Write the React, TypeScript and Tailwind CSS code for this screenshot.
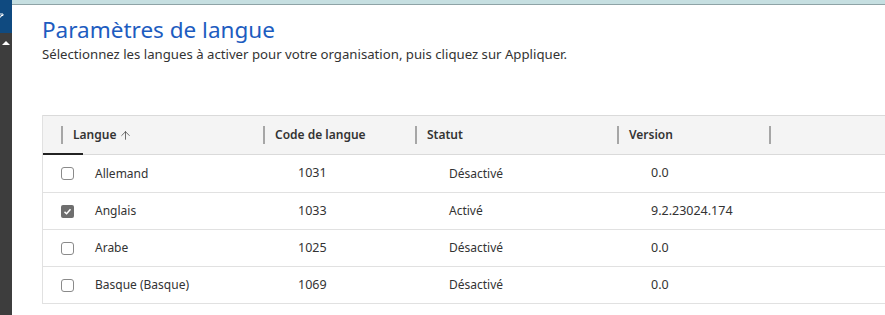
import { ArrowUp } from "lucide-react";

const rows = [
  { name: "Allemand", code: "1031", status: "Désactivé", version: "0.0", checked: false },
  { name: "Anglais", code: "1033", status: "Activé", version: "9.2.23024.174", checked: true },
  { name: "Arabe", code: "1025", status: "Désactivé", version: "0.0", checked: false },
  { name: "Basque (Basque)", code: "1069", status: "Désactivé", version: "0.0", checked: false },
];

const Checkbox = ({ checked }: { checked: boolean }) =>
  checked ? (
    <span className="w-[13px] h-[13px] rounded-[2px] bg-[#6e6e6e] flex items-center justify-center">
      <svg viewBox="0 0 12 12" className="w-[9px] h-[9px]">
        <path d="M2 6.5 L4.8 9 L10 3" fill="none" stroke="white" strokeWidth="2" />
      </svg>
    </span>
  ) : (
    <span className="w-[13px] h-[13px] rounded-[3px] border border-[#8a8a8a] bg-white" />
  );

const Sep = () => <span className="w-[2px] h-[18px] bg-[#a6a6a6]" />;

const App = () => {
  return (
    <div className="flex w-[885px] h-[315px] overflow-hidden bg-white font-['Noto_Sans',sans-serif] text-[#333]">
      {/* left rail */}
      <div className="w-[12px] flex-shrink-0 bg-[#3d3d3d] flex flex-col">
        <div className="h-[33px] bg-[#0f4a80] pt-[13px]">
          <svg viewBox="0 0 4 5" className="w-[4px] h-[5px]">
            <path d="M0 1 H3 M3 1 V2.5 H1 M1 2.5 V4 H0" fill="none" stroke="white" strokeWidth="1" />
          </svg>
        </div>
        <div className="flex justify-center pt-[8px]">
          <span className="w-0 h-0 border-l-[4px] border-r-[4px] border-b-[4px] border-l-transparent border-r-transparent border-b-white" />
        </div>
      </div>

      <div className="flex-1 flex flex-col">
        <div className="h-[5px] bg-[#c6dfe1] border-b border-[#8ea3a6]" />

        <div className="pl-[30px]">
          <h1 className="text-[22.5px] leading-[28px] mt-[11px] text-[#1d5cc0]">Paramètres de langue</h1>
          <p className="text-[13.2px] leading-[18px] mt-[1px] text-[#333]">
            Sélectionnez les langues à activer pour votre organisation, puis cliquez sur Appliquer.
          </p>

          <div className="mt-[52px] border-l border-[#e1e1e1]">
            {/* header */}
            <div className="relative h-[40px] bg-[#f4f4f4] border-y border-[#dadada] flex items-center text-[12px] font-semibold">
              <div className="w-[220px] flex items-center gap-[10px] pl-[18px]">
                <Sep />
                <span className="flex items-center gap-[3px]">
                  Langue <ArrowUp className="w-[13px] h-[13px]" strokeWidth={1.3} />
                </span>
              </div>
              <div className="w-[152px] flex items-center gap-[10px]">
                <Sep />
                <span>Code de langue</span>
              </div>
              <div className="w-[202px] flex items-center gap-[10px]">
                <Sep />
                <span>Statut</span>
              </div>
              <div className="w-[152px] flex items-center gap-[10px]">
                <Sep />
                <span>Version</span>
              </div>
              <Sep />
              <span className="absolute left-0 -bottom-[1px] w-[40px] h-[2px] bg-[#222]" />
            </div>

            {rows.map((r, i) => (
              <div
                key={r.code}
                className={`${i === 0 ? "h-[38px]" : "h-[37px]"} border-b border-[#e1e1e1] flex items-center text-[12px]`}
              >
                <div className="w-[52px] pl-[18px] flex items-center">
                  <Checkbox checked={r.checked} />
                </div>
                <div className="w-[203px]">{r.name}</div>
                <div className="w-[151px] text-[12.5px]">{r.code}</div>
                <div className="w-[202px]">{r.status}</div>
                <div className="text-[12.5px]">{r.version}</div>
              </div>
            ))}
          </div>
        </div>
      </div>
    </div>
  );
};

export default App;
